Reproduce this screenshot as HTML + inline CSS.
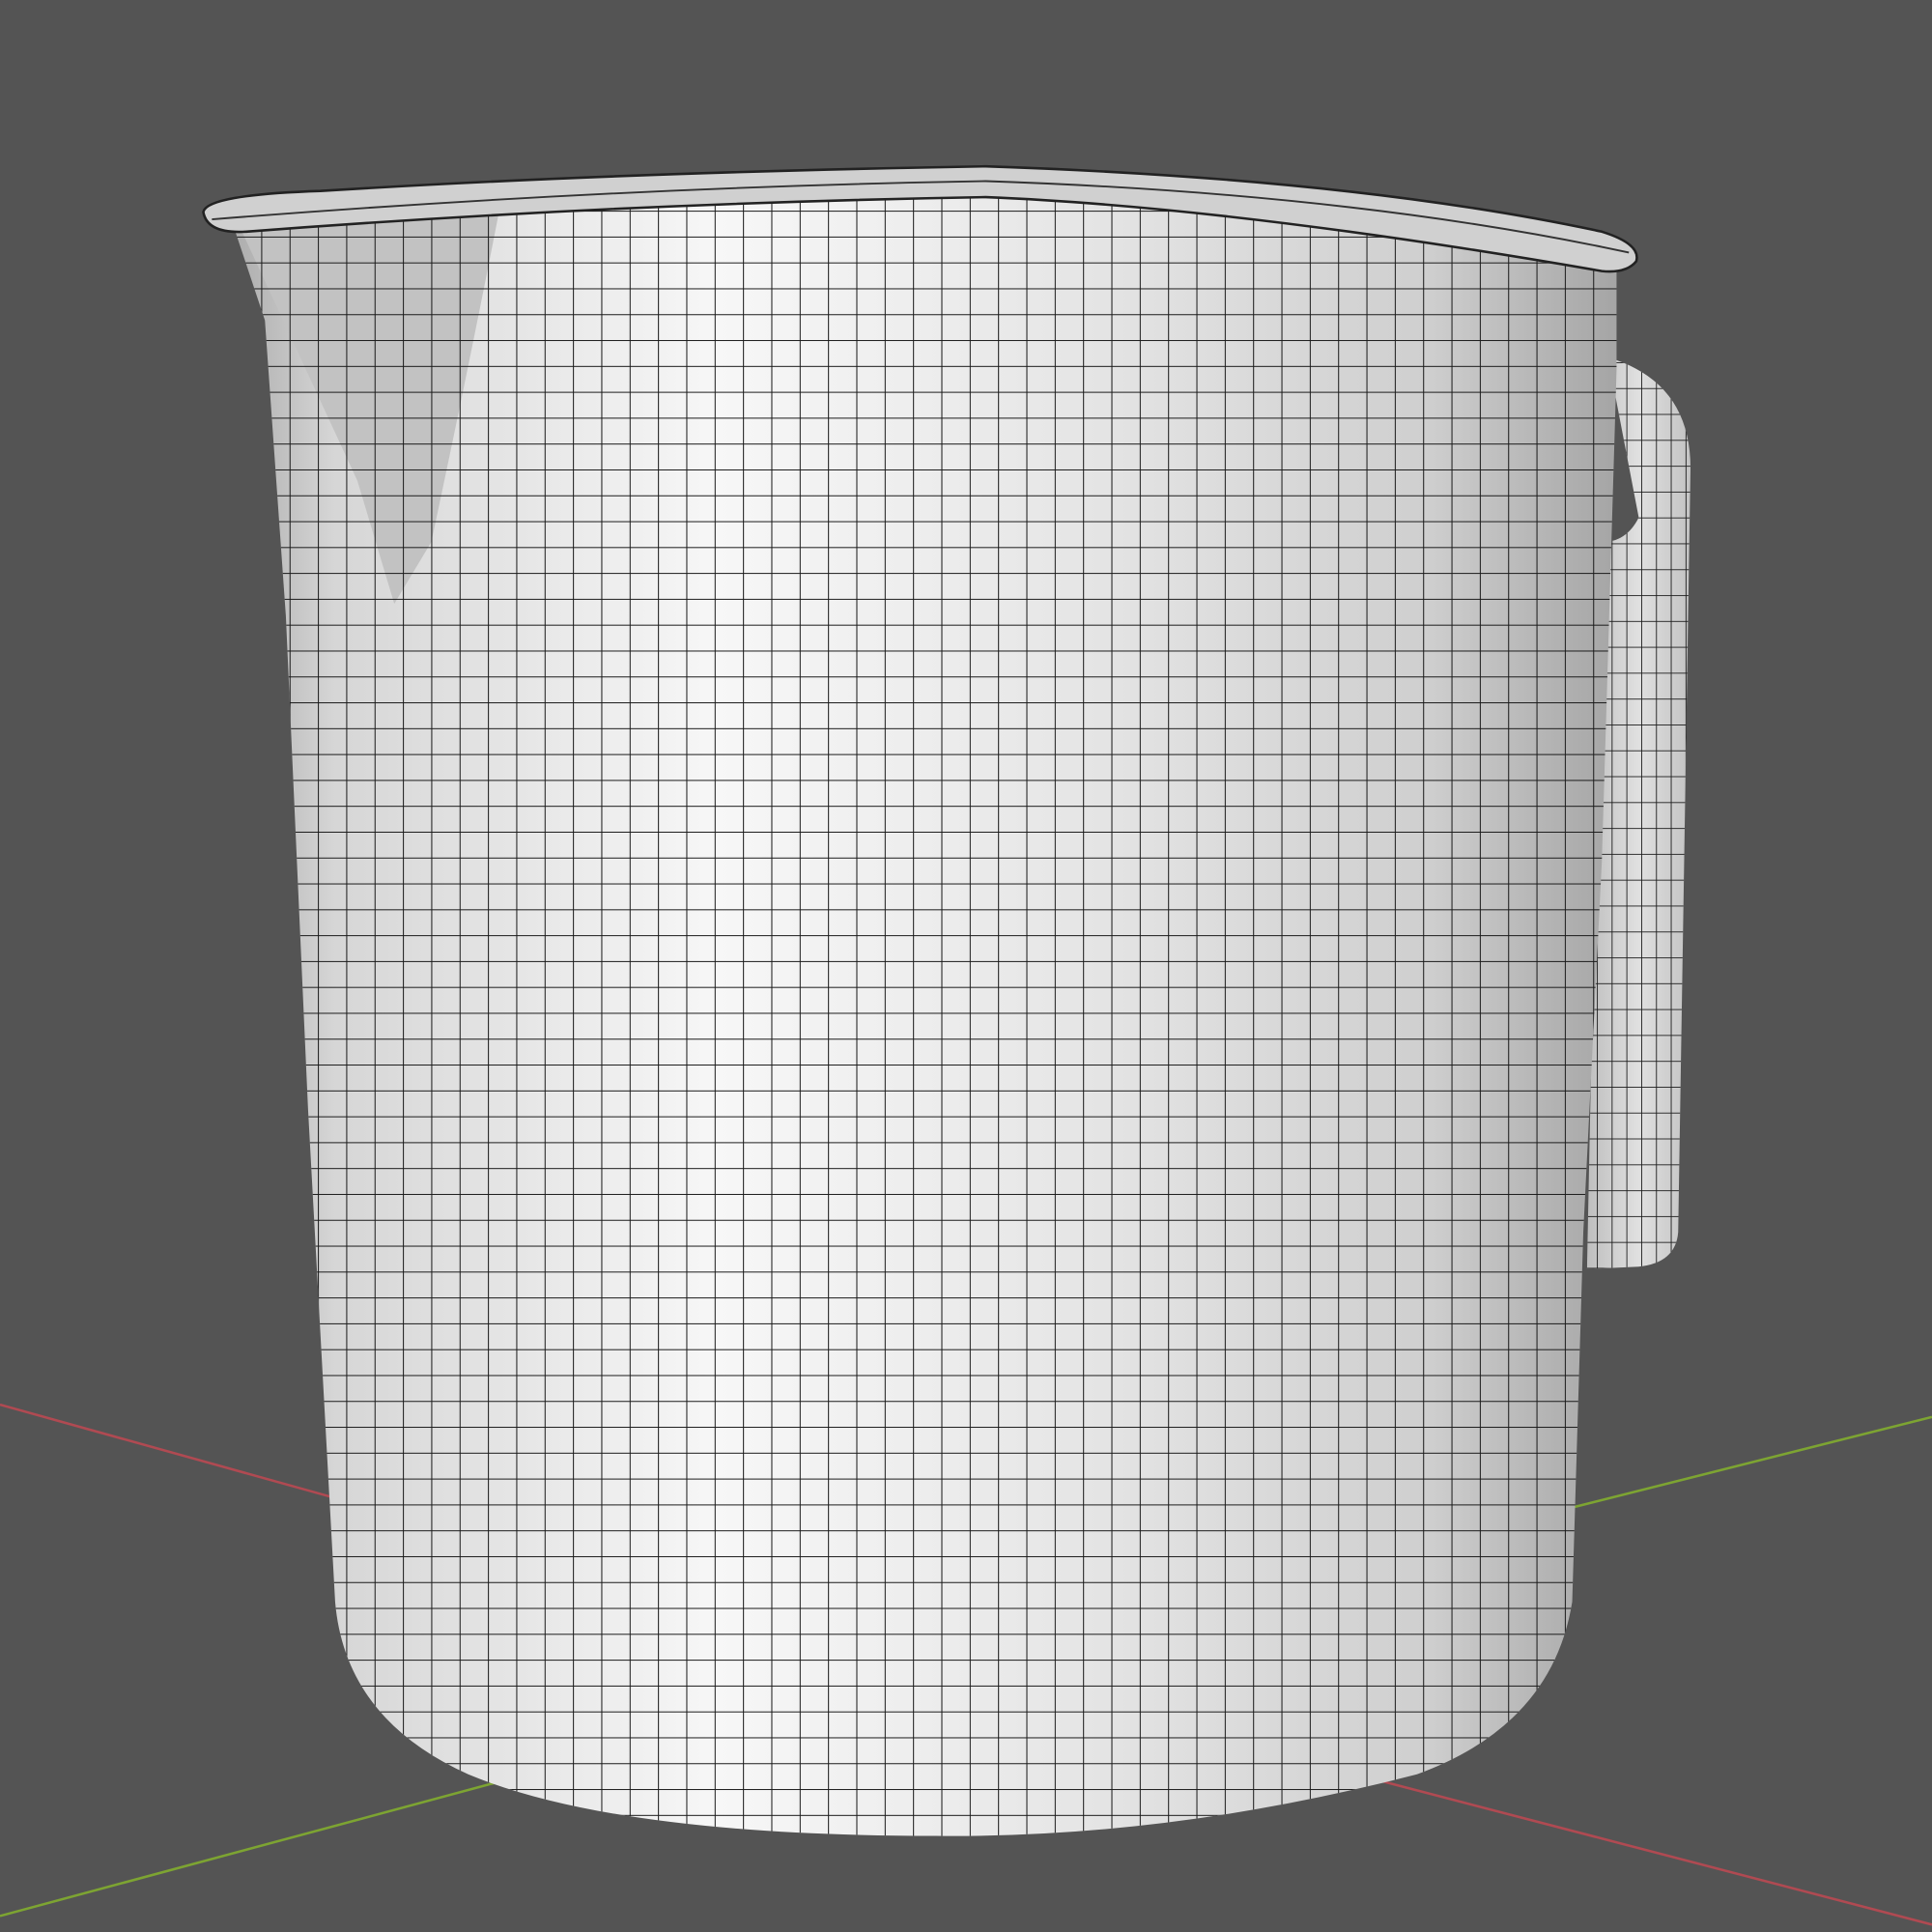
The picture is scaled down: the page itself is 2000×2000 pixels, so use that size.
<!DOCTYPE html>
<html><head><style>html,body{margin:0;padding:0;background:#545454;}svg{display:block}</style></head>
<body>
<svg width="2000" height="2000" viewBox="0 0 1568 1568" xmlns="http://www.w3.org/2000/svg">
<defs>
<linearGradient id="body" x1="0" y1="0" x2="1" y2="0">
<stop offset="0" stop-color="#a8a8a8"/>
<stop offset="0.08" stop-color="#d6d6d6"/>
<stop offset="0.35" stop-color="#f7f7f7"/>
<stop offset="0.6" stop-color="#e6e6e6"/>
<stop offset="0.85" stop-color="#cfcfcf"/>
<stop offset="1" stop-color="#a0a0a0"/>
</linearGradient>
<linearGradient id="hand" x1="0" y1="0" x2="1" y2="0">
<stop offset="0" stop-color="#b8b8b8"/>
<stop offset="0.5" stop-color="#e0e0e0"/>
<stop offset="1" stop-color="#bdbdbd"/>
</linearGradient>
<pattern id="grid" width="23" height="21" patternUnits="userSpaceOnUse" x="5" y="3">
<path d="M0 0H23M0 0V21" stroke="#1a1a1a" stroke-width="1.6" fill="none"/>
</pattern>
<pattern id="grid2" width="12" height="21" patternUnits="userSpaceOnUse">
<path d="M0 0H12M0 0V21" stroke="#1a1a1a" stroke-width="1.4" fill="none"/>
</pattern>
<clipPath id="bc"><path d="M190 185 Q500 165 800 160 Q1100 170 1312 215 L1312 300 L1300 700 L1285 1000 L1276 1300 Q1260 1400 1150 1440 Q950 1492 760 1490 Q500 1490 380 1440 Q280 1395 272 1300 L250 900 L232 500 L215 260 Z"/></clipPath>
<clipPath id="hc"><path d="M1305 290 Q1372 310 1372 380 L1362 1000 Q1360 1025 1330 1028 L1288 1030 L1300 440 Q1320 440 1330 420 Z"/></clipPath>
</defs>
<rect width="1568" height="1568" fill="#545454"/>
<g stroke-width="2" fill="none">
<path d="M0 1140 L280 1218" stroke="#b04a52"/>
<path d="M1100 1440 L1568 1562" stroke="#b04a52"/>
<path d="M0 1555 L420 1442" stroke="#7da432"/>
<path d="M1270 1225 L1568 1150" stroke="#7da432"/>
</g>
<g clip-path="url(#hc)">
<rect x="1280" y="280" width="100" height="760" fill="url(#hand)"/>
<rect x="1280" y="280" width="100" height="760" fill="url(#grid2)"/>
</g>
<g clip-path="url(#bc)">
<rect x="180" y="150" width="1150" height="1360" fill="url(#body)"/>
<path d="M195 185 L405 172 Q380 300 350 440 L320 490 L290 390 Z" fill="#c2c2c2"/>
<rect x="180" y="150" width="1150" height="1360" fill="url(#grid)"/>
</g>
<path d="M165 172 Q168 158 260 155 Q500 140 800 135 Q1100 145 1300 188 Q1332 198 1328 212 Q1320 222 1300 220 Q1000 168 800 160 Q500 165 200 188 Q168 190 165 172 Z" fill="#d0d0d0" stroke="#222" stroke-width="2"/>
<path d="M172 178 Q500 152 800 147 Q1100 157 1322 205" stroke="#333" stroke-width="1.5" fill="none"/>
</svg>
</body></html>
